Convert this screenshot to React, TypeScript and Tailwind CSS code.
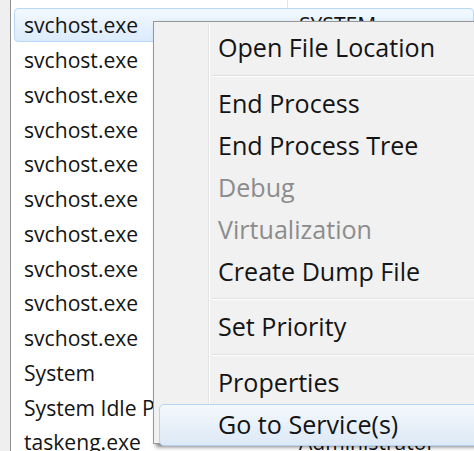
import React from 'react';

const rows: { name: string; user: string }[] = [
  { name: 'svchost.exe', user: 'SYSTEM' },
  { name: 'svchost.exe', user: 'SYSTEM' },
  { name: 'svchost.exe', user: 'SYSTEM' },
  { name: 'svchost.exe', user: 'SYSTEM' },
  { name: 'svchost.exe', user: 'SYSTEM' },
  { name: 'svchost.exe', user: 'SYSTEM' },
  { name: 'svchost.exe', user: 'SYSTEM' },
  { name: 'svchost.exe', user: 'SYSTEM' },
  { name: 'svchost.exe', user: 'SYSTEM' },
  { name: 'svchost.exe', user: 'SYSTEM' },
  { name: 'System', user: 'SYSTEM' },
  { name: 'System Idle Process', user: 'SYSTEM' },
  { name: 'taskeng.exe', user: 'Administrator' },
];

type Item = { label: string; disabled?: boolean; hover?: boolean } | 'sep';

const items: Item[] = [
  { label: 'Open File Location' },
  'sep',
  { label: 'End Process' },
  { label: 'End Process Tree' },
  { label: 'Debug', disabled: true },
  { label: 'Virtualization', disabled: true },
  { label: 'Create Dump File' },
  'sep',
  { label: 'Set Priority' },
  'sep',
  { label: 'Properties' },
  { label: 'Go to Service(s)', hover: true },
];

export default function App() {
  return (
    <div
      className="relative w-[474px] h-[451px] overflow-hidden bg-white text-[#141414]"
      style={{ fontFamily: '"Open Sans", "Noto Sans", sans-serif' }}
    >
      <div className="flex h-full">
        <div className="w-[11px] shrink-0 bg-[#efefef] border-r border-[#8f8f8f]" />
        <div className="relative flex-1 pt-[7.6px]">
          <div className="absolute left-[276px] top-0 h-[8px] w-px bg-[#e5e5e5]" />
          {rows.map((r, i) => (
            <div
              key={i}
              className={
                'flex items-center h-[34.75px] text-[21.1px] leading-none ' +
                (i === 0
                  ? 'ml-[3px] rounded-[4px] border border-[#b9d7f7] bg-gradient-to-b from-[#f2f8fe] to-[#dcebfb]'
                  : 'ml-[3px] border border-transparent')
              }
            >
              <span className="w-[284px] pl-[9px] whitespace-nowrap">{r.name}</span>
              <span className="whitespace-nowrap">{r.user}</span>
            </div>
          ))}
        </div>
      </div>

      <div className="absolute left-[153px] top-[21px] w-[340px] h-[423px] bg-[#f1f1f1] border border-[#979797] shadow-[3px_3px_4px_rgba(0,0,0,0.5)] p-[2px]">
        <div className="absolute left-[54px] top-[2px] bottom-[2px] w-px bg-[#e2e3e3]" />
        <div className="absolute left-[55px] top-[2px] bottom-[2px] w-px bg-white" />
        <div className="relative flex flex-col pt-[3px]">
          {items.map((it, i) =>
            it === 'sep' ? (
              <div key={i} className="h-[13.5px] flex flex-col justify-center pl-[56px]">
                <div className="h-px bg-[#e0e0e0]" />
                <div className="h-px bg-white" />
              </div>
            ) : (
              <div
                key={i}
                className={
                  'relative flex items-center h-[42px] pl-[62px] text-[25.1px] leading-none whitespace-nowrap ' +
                  (it.disabled ? 'text-[#8c8c8c]' : 'text-[#141414]')
                }
              >
                {it.hover && (
                  <div className="absolute left-[3px] right-0 top-0 bottom-0 rounded-[5px] border border-[#b6d3f3] bg-gradient-to-b from-[#f3f8fd] to-[#dde9f6]" />
                )}
                <span className="relative">{it.label}</span>
              </div>
            )
          )}
        </div>
      </div>
    </div>
  );
}
